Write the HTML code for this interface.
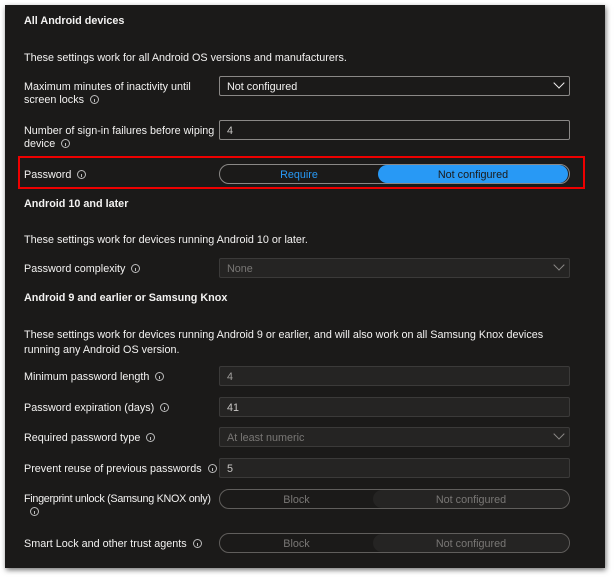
<!DOCTYPE html>
<html><head><meta charset="utf-8"><style>
*{margin:0;padding:0;box-sizing:border-box}
body{width:614px;height:577px;background:#fff;position:relative;overflow:hidden;font-family:"Liberation Sans",sans-serif;font-size:10.8px;color:#f3f2f1}
#p{position:absolute;left:5px;top:5px;width:600px;height:563px;background:#1b1a19;box-shadow:1px 2px 5px rgba(0,0,0,.55)}
.t{position:absolute;left:24px;white-space:nowrap;line-height:13px;margin-top:1px}
.b{font-weight:bold}
.i{display:inline-block;width:9px;height:9px;border:1px solid #bbb;border-radius:50%;vertical-align:-1px;margin-left:6px;position:relative}
.i:after{content:"";position:absolute;left:3px;top:3px;width:1px;height:3px;background:#bbb}
.f{position:absolute;left:219px;width:351px;height:20px;background:#252423;border:1px solid #3b3a39;border-radius:2px;padding-left:7px;line-height:20px;color:#a19f9d}
.f.act{background:#1b1a19;border-color:#8a8886;color:#f3f2f1}
.f.dis{color:#797775}
.chev{position:absolute;right:6px;width:8px;height:8px;border-right:1px solid #bbb;border-bottom:1px solid #bbb;transform:rotate(45deg);top:2px}
.tg{position:absolute;left:219px;width:351px;height:20px;border:1px solid #8a8886;border-radius:10px;overflow:hidden}
.tg span{position:absolute;top:0;height:18px;line-height:20px;text-align:center}
.tg.dis{border-color:#605e5c}
</style></head><body>
<div style="position:absolute;left:18px;top:156px;width:567px;height:33px;border:2px solid #e00;z-index:2"></div>
<div id="p"></div>
<div class="t b" style="top:14px">All Android devices</div>
<div class="t" style="top:51px">These settings work for all Android OS versions and manufacturers.</div>
<div class="t" style="top:80px">Maximum minutes of inactivity until<br>screen locks<span class="i"></span></div>
<div class="f act" style="top:76px">Not configured<div class="chev" style="border-color:#f3f2f1"></div></div>
<div class="t" style="top:124px">Number of sign-in failures before wiping<br>device<span class="i"></span></div>
<div class="f act" style="top:120px;color:#c8c6c4">4</div>
<div class="t" style="top:168px">Password<span class="i"></span></div>
<div class="tg" style="top:164px"><span style="left:0;width:158px;color:#2899f5">Require</span><span style="left:158px;width:190px;background:#2899f5;border-radius:9px;color:#1b1a19">Not configured</span></div>
<div class="t b" style="top:197px">Android 10 and later</div>
<div class="t" style="top:233px">These settings work for devices running Android 10 or later.</div>
<div class="t" style="top:262px">Password complexity<span class="i"></span></div>
<div class="f dis" style="top:258px">None<div class="chev" style="border-color:#8a8886"></div></div>
<div class="t b" style="top:291px">Android 9 and earlier or Samsung Knox</div>
<div class="t" style="top:327px;line-height:15px">These settings work for devices running Android 9 or earlier, and will also work on all Samsung Knox devices<br>running any Android OS version.</div>
<div class="t" style="top:370px">Minimum password length<span class="i"></span></div>
<div class="f" style="top:366px">4</div>
<div class="t" style="top:401px">Password expiration (days)<span class="i"></span></div>
<div class="f" style="top:397px;color:#c8c6c4">41</div>
<div class="t" style="top:431px">Required password type<span class="i"></span></div>
<div class="f dis" style="top:427px">At least numeric<div class="chev" style="border-color:#8a8886"></div></div>
<div class="t" style="top:462px">Prevent reuse of previous passwords<span class="i"></span></div>
<div class="f" style="top:458px;color:#c8c6c4">5</div>
<div class="t" style="top:492px;letter-spacing:-0.3px">Fingerprint unlock (Samsung KNOX only)<br><span class="i" style="margin-left:6px"></span></div>
<div class="tg dis" style="top:489px"><span style="left:0;width:153px;color:#797775">Block</span><span style="left:153px;width:196px;background:#252423;border-radius:9px;color:#797775">Not configured</span></div>
<div class="t" style="top:537px">Smart Lock and other trust agents<span class="i"></span></div>
<div class="tg dis" style="top:533px"><span style="left:0;width:153px;color:#797775">Block</span><span style="left:153px;width:196px;background:#252423;border-radius:9px;color:#797775">Not configured</span></div>
</body></html>
